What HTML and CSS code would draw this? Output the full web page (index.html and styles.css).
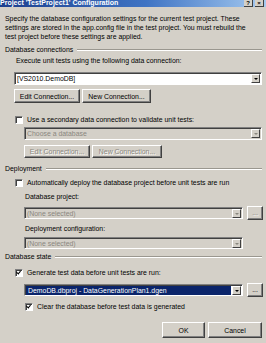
FILE: index.html
```html
<!DOCTYPE html>
<html>
<head>
<meta charset="utf-8">
<link rel="stylesheet" href="styles.css">
</head>
<body>
<div class="window">
  <div class="titlebar">
    <span class="title">Project 'TestProject1' Configuration</span>
    <div class="tb-buttons"><span class="tbtn">?</span><span class="tbtn">×</span></div>
  </div>
  <div class="content">
    <p class="desc">Specify the database configuration settings for the current test project. These<br>settings are stored in the app.config file in the test project. You must rebuild the<br>test project before these settings are applied.</p>

    <div class="section s1"><span>Database connections</span><i class="rule"></i></div>
    <div class="label exec">Execute unit tests using the following data connection:</div>
    <div class="combo c1"><span class="val">[VS2010.DemoDB]</span><span class="arrow"></span></div>
    <div class="btnrow b1"><span class="btn w-edit">Edit Connection...</span><span class="btn w-new">New Connection...</span></div>
    <div class="check k1"><span class="box"></span><span>Use a secondary data connection to validate unit tests:</span></div>
    <div class="combo c2 disabled"><span class="val">Choose a database</span><span class="arrow"></span></div>
    <div class="btnrow b2"><span class="btn disabled w-edit2">Edit Connection...</span><span class="btn disabled w-new2">New Connection...</span></div>

    <div class="section s2"><span>Deployment</span><i class="rule"></i></div>
    <div class="check k2"><span class="box"></span><span>Automatically deploy the database project before unit tests are run</span></div>
    <div class="label sub l1">Database project:</div>
    <div class="pickrow p1"><div class="combo disabled"><span class="val">(None selected)</span><span class="arrow"></span></div><span class="btn dots disabled">...</span></div>
    <div class="label sub l2">Deployment configuration:</div>
    <div class="pickrow p2"><div class="combo disabled"><span class="val">(None selected)</span><span class="arrow"></span></div></div>

    <div class="section s3"><span>Database state</span><i class="rule"></i></div>
    <div class="check k3"><span class="box checked"></span><span>Generate test data before unit tests are run:</span></div>
    <div class="pickrow p3"><div class="combo selected"><span class="val">DemoDB.dbproj - DataGenerationPlan1.dgen</span><span class="arrow"></span></div><span class="btn dots">...</span></div>
    <div class="check k4"><span class="box checked"></span><span>Clear the database before test data is generated</span></div>

    <div class="footer"><span class="btn ok">OK</span><span class="btn cancel">Cancel</span></div>
  </div>
</div>
</body>
</html>
```

FILE: styles.css
```css
html, body {
  margin: 0;
  padding: 0;
}
body {
  width: 266px;
  height: 343px;
  overflow: hidden;
  background: #d4d0c8;
  font-family: "Liberation Sans", Arial, sans-serif;
  font-size: 6.9px;
  color: #000;
}
.window {
  width: 266px;
  height: 343px;
  display: flex;
  flex-direction: column;
  overflow: hidden;
}
.titlebar {
  height: 7px;
  background: linear-gradient(to right, #1c3f8e, #3f74c4 55%, #a6caf0);
  position: relative;
  overflow: hidden;
}
.title {
  position: absolute;
  left: 0;
  top: -1px;
  color: #fff;
  font-weight: bold;
  font-size: 7px;
  line-height: 8px;
  white-space: nowrap;
}
.tb-buttons {
  position: absolute;
  right: 2px;
  top: 0;
  display: flex;
  gap: 2px;
}
.tbtn {
  width: 8px;
  height: 6px;
  background: #d4d0c8;
  border-right: 1px solid #404040;
  border-bottom: 1px solid #404040;
  font-weight: bold;
  font-size: 6px;
  line-height: 6px;
  text-align: center;
  overflow: hidden;
}
.content {
  padding-left: 5px;
  display: flex;
  flex-direction: column;
  align-items: flex-start;
}
.desc {
  margin: 7px 0 0 0;
  line-height: 9px;
  white-space: nowrap;
}
.section {
  width: 257px;
  display: flex;
  align-items: center;
  line-height: 9px;
  white-space: nowrap;
}
.section .rule {
  flex: 1;
  height: 0;
  border-top: 1px solid #9a978f;
  border-bottom: 1px solid #fff;
  margin-left: 4px;
}
.s1 { margin-top: 4px; }
.s2 { margin-top: 6px; }
.s3 { margin-top: 3px; }
.label {
  line-height: 9px;
  white-space: nowrap;
}
.exec { margin-top: 2px; margin-left: 11px; }
.sub { margin-left: 20px; }
.l1 { margin-top: 5px; }
.l2 { margin-top: 4px; }

.combo {
  box-sizing: border-box;
  height: 13px;
  background: #fff;
  border: 1px solid;
  border-color: #808080 #fff #fff #808080;
  box-shadow: inset 1px 1px 0 #404040;
  display: flex;
  align-items: center;
  white-space: nowrap;
  position: relative;
}
.combo .val {
  flex: 1;
  padding-left: 2px;
  line-height: 9px;
  overflow: hidden;
}
.combo .arrow {
  box-sizing: border-box;
  width: 9px;
  height: 9px;
  margin-right: 1px;
  background: #d4d0c8;
  border: 1px solid;
  border-color: #fff #404040 #404040 #fff;
  position: relative;
}
.combo .arrow::after {
  content: "";
  position: absolute;
  left: 2px;
  top: 3px;
  border-left: 2px solid transparent;
  border-right: 2px solid transparent;
  border-top: 2px solid #000;
}
.combo.disabled {
  background: #d4d0c8;
  color: #8a877f;
}
.combo.disabled .arrow::after { border-top-color: #8a877f; }
.combo.selected .val {
  background: #0a246a;
  color: #fff;
  margin: 0 1px 0 1px;
}
.c1 { margin-top: 7px; margin-left: 9px; width: 248px; }
.c2 { margin-top: 3px; margin-left: 19px; width: 238px; }

.btnrow {
  display: flex;
  gap: 2px;
}
.btn {
  box-sizing: border-box;
  height: 14px;
  background: #d4d0c8;
  border: 1px solid;
  border-color: #fff #404040 #404040 #fff;
  box-shadow: inset -1px -1px 0 #808080;
  display: flex;
  align-items: center;
  justify-content: center;
  white-space: nowrap;
  line-height: 9px;
}
.btn.disabled {
  color: #8a877f;
  text-shadow: 1px 1px 0 #fff;
}
.b1 { margin-top: 4px; margin-left: 9px; }
.b2 { margin-top: 5px; margin-left: 19px; }
.b2 .btn { height: 13px; }
.w-edit { width: 66px; }
.w-new { width: 69px; }
.w-edit2 { width: 66px; }
.w-new2 { width: 70px; }

.check {
  display: flex;
  align-items: center;
  line-height: 9px;
  white-space: nowrap;
  margin-left: 10px;
}
.check .box {
  box-sizing: border-box;
  width: 8px;
  height: 8px;
  margin-right: 4px;
  background: #fff;
  border: 1px solid;
  border-color: #808080 #fff #fff #808080;
  box-shadow: inset 1px 1px 0 #404040;
  position: relative;
}
.check .box.checked::after {
  content: "";
  position: absolute;
  left: 1px;
  top: 0px;
  width: 2px;
  height: 3px;
  border-right: 1.5px solid #000;
  border-bottom: 1.5px solid #000;
  transform: rotate(40deg);
}
.k1 { margin-top: 12px; }
.k2 { margin-top: 5px; }
.k3 { margin-top: 7px; }
.k4 { margin-top: 5px; margin-left: 20px; }

.pickrow {
  display: flex;
  gap: 4px;
  margin-left: 19px;
}
.pickrow .combo { width: 219px; height: 12px; }
.p1 { margin-top: 6px; }
.p2 { margin-top: 4px; }
.p3 { margin-top: 7px; }
.dots {
  width: 16px;
  height: 14px;
  margin-top: -1px;
  line-height: 6px;
  align-items: flex-end;
  padding-bottom: 3px;
}

.footer {
  margin-top: 11px;
  margin-left: 157px;
  display: flex;
  gap: 3px;
}
.ok { width: 43px; height: 16px; }
.cancel { width: 54px; height: 16px; }
```
